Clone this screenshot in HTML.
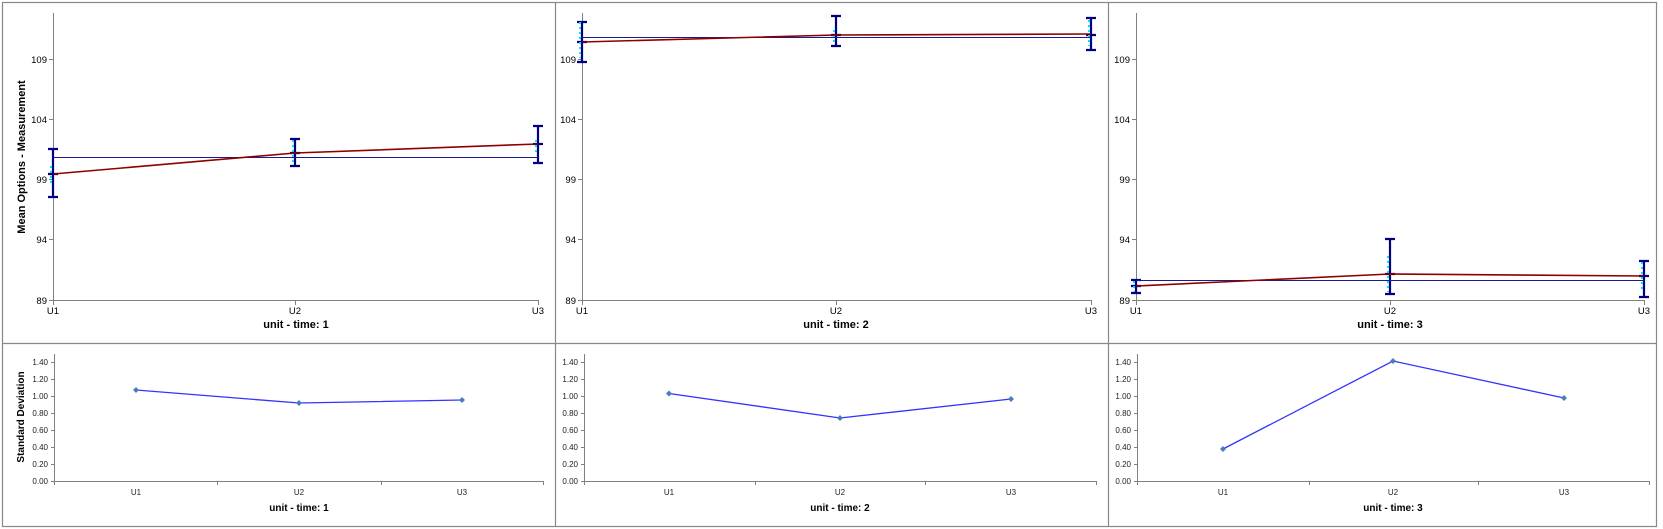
<!DOCTYPE html>
<html><head><meta charset="utf-8"><style>
html,body{margin:0;padding:0;background:#fff;width:1663px;height:529px;overflow:hidden}
svg{display:block;font-family:"Liberation Sans",Arial,sans-serif}
.ax{stroke:#808080;stroke-width:1;fill:none}
.t{font-size:9.5px;fill:#000}
.s{font-size:8px;fill:#222}
.b{font-size:11px;font-weight:bold;fill:#000}
.bs{font-size:10px;font-weight:bold;fill:#000}
.eb{stroke:#000080;stroke-width:2.2;fill:none}
.cy{stroke:#00e5ff;stroke-width:2;stroke-dasharray:2 3;fill:none}
.mn{stroke:#1a1a8c;stroke-width:1;fill:none}
.rd{stroke:#8b0000;stroke-width:1.6;fill:none}
.sd{stroke:#3333ff;stroke-width:1.3;fill:none}
.mk{fill:#4a7ebb}
</style></head><body>
<svg width="1663" height="529" viewBox="0 0 1663 529">
<g stroke="#888" stroke-width="1.2" fill="none">
<rect x="2.5" y="2.5" width="1654" height="524"/>
<line x1="2" y1="343.5" x2="1657" y2="343.5"/>
<line x1="555.5" y1="2" x2="555.5" y2="527"/>
<line x1="1108.5" y1="2" x2="1108.5" y2="527"/>
</g>

<g>
<path class="ax" d="M53.5 13V300.5H538.5M49 59.5H53M49 119.5H53M49 179.5H53M49 239.5H53M49 300.5H53M53.5 300V305M295.5 300V305M538.5 300V305"/>
<g class="t" text-anchor="end"><text x="47" y="63">109</text><text x="47" y="123">104</text><text x="47" y="183">99</text><text x="47" y="243">94</text><text x="47" y="304">89</text></g>
<g class="t" text-anchor="middle"><text x="53" y="314">U1</text><text x="295" y="314">U2</text><text x="538" y="314">U3</text></g>
<text class="b" x="296" y="328" text-anchor="middle">unit - time: 1</text>
<text class="b" transform="translate(25,157) rotate(-90)" text-anchor="middle">Mean Options - Measurement</text>
<path class="eb" d="M53 149V197M48 149H58M48 197H58M48 174H58 M295 139V166M290 139H300M290 166H300M290 153H300 M538 126V163M533 126H543M533 163H543M533 144H543"/>
<path class="cy" d="M51 166V185M293 140V162M536 140V152"/>
<line class="mn" x1="53" y1="157.5" x2="538" y2="157.5"/>
<polyline class="rd" points="53,174 295,153 538,144"/>
</g>

<g>
<path class="ax" d="M582.5 13V300.5H1091.5M578 59.5H582M578 119.5H582M578 179.5H582M578 239.5H582M578 300.5H582M582.5 300V305M836.5 300V305M1091.5 300V305"/>
<g class="t" text-anchor="end"><text x="576" y="63">109</text><text x="576" y="123">104</text><text x="576" y="183">99</text><text x="576" y="243">94</text><text x="576" y="304">89</text></g>
<g class="t" text-anchor="middle"><text x="582" y="314">U1</text><text x="836" y="314">U2</text><text x="1091" y="314">U3</text></g>
<text class="b" x="836" y="328" text-anchor="middle">unit - time: 2</text>
<path class="eb" d="M582 22V62M577 22H587M577 62H587M577 42H587 M836 16V46M831 16H841M831 46H841M831 35H841 M1091 18V50M1086 18H1096M1086 50H1096M1086 35H1096"/>
<path class="cy" d="M580 22V58M834 30V45M1089 20V46"/>
<line class="mn" x1="582" y1="37.5" x2="1091" y2="37.5"/>
<polyline class="rd" points="582,42 836,35 1091,34"/>
</g>

<g>
<path class="ax" d="M1136.5 13V300.5H1644.5M1132 59.5H1136M1132 119.5H1136M1132 179.5H1136M1132 239.5H1136M1132 300.5H1136M1136.5 300V305M1390.5 300V305M1644.5 300V305"/>
<g class="t" text-anchor="end"><text x="1130" y="63">109</text><text x="1130" y="123">104</text><text x="1130" y="183">99</text><text x="1130" y="243">94</text><text x="1130" y="304">89</text></g>
<g class="t" text-anchor="middle"><text x="1136" y="314">U1</text><text x="1390" y="314">U2</text><text x="1644" y="314">U3</text></g>
<text class="b" x="1390" y="328" text-anchor="middle">unit - time: 3</text>
<path class="eb" d="M1136 280V293M1131 280H1141M1131 293H1141M1131 286H1141 M1390 239V294M1385 239H1395M1385 294H1395M1385 274H1395 M1644 261V297M1639 261H1649M1639 297H1649M1639 276H1649"/>
<path class="cy" d="M1134 281V292M1388 256V292M1642 262V292"/>
<line class="mn" x1="1136" y1="280.5" x2="1644" y2="280.5"/>
<polyline class="rd" points="1136,286 1390,274 1644,276"/>
</g>

<g>
<path class="ax" d="M54.5 354V481.5H543.5M51 362.5H54M51 379.5H54M51 396.5H54M51 413.5H54M51 430.5H54M51 447.5H54M51 464.5H54M51 481.5H54M217.5 481V485M381.5 481V485M543.5 481V485M54.5 481V485"/>
<g class="s" text-anchor="end"><text x="48" y="365">1.40</text><text x="48" y="382">1.20</text><text x="48" y="399">1.00</text><text x="48" y="416">0.80</text><text x="48" y="433">0.60</text><text x="48" y="450">0.40</text><text x="48" y="467">0.20</text><text x="48" y="484">0.00</text></g>
<g class="s" text-anchor="middle"><text x="136" y="495">U1</text><text x="299" y="495">U2</text><text x="462" y="495">U3</text></g>
<text class="bs" x="299" y="511" text-anchor="middle">unit - time: 1</text>
<text class="bs" transform="translate(24,417) rotate(-90)" text-anchor="middle">Standard Deviation</text>
<polyline class="sd" points="136,390 299,403 462,400"/>
<g class="mk"><path d="M136 387l3 3-3 3-3-3z"/><path d="M299 400l3 3-3 3-3-3z"/><path d="M462 397l3 3-3 3-3-3z"/></g>
</g>

<g>
<path class="ax" d="M584.5 354V481.5H1096.5M581 362.5H584M581 379.5H584M581 396.5H584M581 413.5H584M581 430.5H584M581 447.5H584M581 464.5H584M581 481.5H584M755.5 481V485M925.5 481V485M1096.5 481V485M584.5 481V485"/>
<g class="s" text-anchor="end"><text x="578" y="365">1.40</text><text x="578" y="382">1.20</text><text x="578" y="399">1.00</text><text x="578" y="416">0.80</text><text x="578" y="433">0.60</text><text x="578" y="450">0.40</text><text x="578" y="467">0.20</text><text x="578" y="484">0.00</text></g>
<g class="s" text-anchor="middle"><text x="669" y="495">U1</text><text x="840" y="495">U2</text><text x="1011" y="495">U3</text></g>
<text class="bs" x="840" y="511" text-anchor="middle">unit - time: 2</text>
<polyline class="sd" points="669,393.5 840,418 1011,399"/>
<g class="mk"><path d="M669 390.5l3 3-3 3-3-3z"/><path d="M840 415l3 3-3 3-3-3z"/><path d="M1011 396l3 3-3 3-3-3z"/></g>
</g>

<g>
<path class="ax" d="M1137.5 354V481.5H1649.5M1134 362.5H1137M1134 379.5H1137M1134 396.5H1137M1134 413.5H1137M1134 430.5H1137M1134 447.5H1137M1134 464.5H1137M1134 481.5H1137M1309.5 481V485M1478.5 481V485M1649.5 481V485M1137.5 481V485"/>
<g class="s" text-anchor="end"><text x="1131" y="365">1.40</text><text x="1131" y="382">1.20</text><text x="1131" y="399">1.00</text><text x="1131" y="416">0.80</text><text x="1131" y="433">0.60</text><text x="1131" y="450">0.40</text><text x="1131" y="467">0.20</text><text x="1131" y="484">0.00</text></g>
<g class="s" text-anchor="middle"><text x="1223" y="495">U1</text><text x="1393" y="495">U2</text><text x="1564" y="495">U3</text></g>
<text class="bs" x="1393" y="511" text-anchor="middle">unit - time: 3</text>
<polyline class="sd" points="1223,449 1393,361 1564,398"/>
<g class="mk"><path d="M1223 446l3 3-3 3-3-3z"/><path d="M1393 358l3 3-3 3-3-3z"/><path d="M1564 395l3 3-3 3-3-3z"/></g>
</g>
</svg>
</body></html>
